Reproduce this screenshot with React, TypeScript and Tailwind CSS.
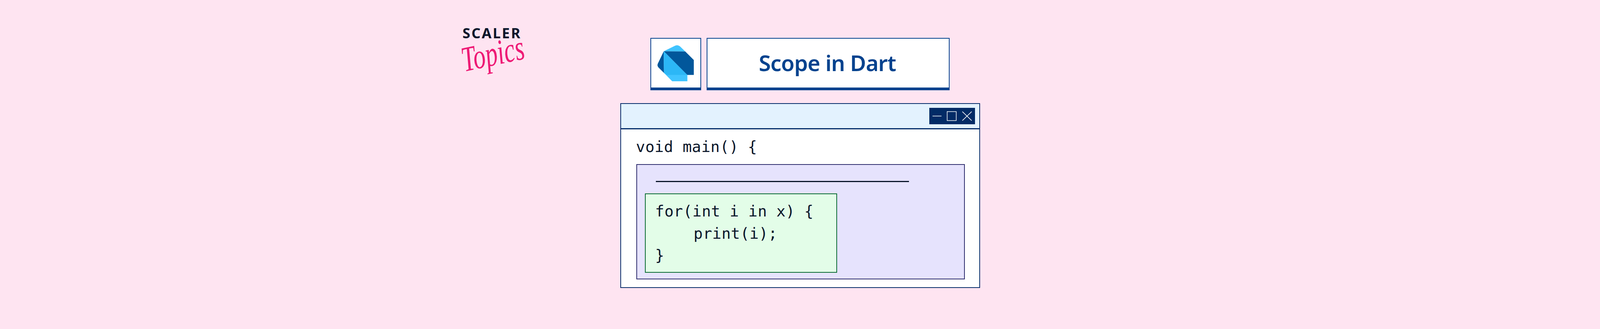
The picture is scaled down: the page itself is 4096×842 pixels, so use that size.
export default function App() {
  const mono = "font-['DejaVu_Sans_Mono',monospace]";
  return (
    <div className="flex h-[842px] w-[4096px] items-start overflow-hidden bg-[#fee4f1]">
      <div className="w-[1588px] shrink-0 pl-[1182px] pt-[65px]">
        <div className="pl-[2px] font-['Noto_Sans',sans-serif] text-[36px] leading-[40px] font-bold tracking-[3.2px] text-[#0a162a]">SCALER</div>
        <div className="mt-[7px] origin-left font-['Liberation_Serif',serif] text-[90px] leading-[84px] text-[#ee1a75] italic [transform:rotate(-12deg)_scaleX(0.7)]">Topics</div>
      </div>
      <div className="flex w-[921px] shrink-0 flex-col pt-[97px]">
        <div className="flex justify-center gap-[14px] pr-[2px]">
          <div className="flex h-[134px] w-[130px] items-center justify-center border-2 border-b-[7px] border-[#03428e] bg-white">
            <svg width="96.7" height="95.6" viewBox="130 140 425 420">
              <path d="M210 216 L143 355 Q134 378 150 397 L213 460 Z" fill="#01579b" />
              <path d="M210 216 L335 154 Q364 138 392 160 L452 218 Z" fill="#40c4ff" />
              <path d="M210 216 L452 218 L548 314 L548 482 L472 482 Z" fill="#01579b" />
              <path d="M210 216 L476 482 L476 553 L305 553 L213 460 Z" fill="#40c4ff" />
              <path d="M210 216 L472 482 L246 482 L213 460 Z" fill="#2cb7f6" />
            </svg>
          </div>
          <div className="flex h-[134px] w-[622px] items-center justify-center border-2 border-b-[7px] border-[#03428e] bg-white pb-[4px] pr-[3px]">
            <span className="font-['Noto_Sans',sans-serif] text-[56px] font-semibold tracking-[-0.9px] text-[#03428e]">Scope in Dart</span>
          </div>
        </div>
        <div className="mt-[33px] flex h-[473px] flex-col border-2 border-[#042c6a] bg-white">
          <div className="flex h-[65px] items-center justify-end border-b-[3px] border-[#042c6a] bg-[#e3f2fe] pr-[11px]">
            <svg width="117" height="42" viewBox="0 0 117 42" className="bg-[#022b66]">
              <path d="M8.2 21 H31.3" stroke="#fff" strokeWidth="1.5" fill="none" />
              <rect x="45.7" y="9.6" width="23.2" height="23" stroke="#fff" strokeWidth="1.5" fill="none" />
              <path d="M84.6 9.6 L108.5 32.6 M108.5 9.6 L84.6 32.6" stroke="#fff" strokeWidth="1.5" fill="none" />
            </svg>
          </div>
          <div className={`${mono} h-[89px] pl-[38px] pt-[16px] text-[39px] leading-[57px] tracking-[0.4px] text-[#0a162a]`}>void main() {"{"}</div>
          <div className="ml-[39px] mr-[37px] h-[295px] border-2 border-[#2f2e6e] bg-[#e6e3fd] pl-[20px] pt-[41px]">
            <div className="ml-[28px] h-[3px] w-[648px] bg-[#0a162a]" />
            <div className={`${mono} mt-[29px] h-[203px] w-[492px] whitespace-pre border-2 border-[#0a6b32] bg-[#e3fde8] pl-[24px] pt-[16px] text-[39px] leading-[56.6px] tracking-[0.4px] text-[#0a162a]`}>
              <div>{"for(int i in x) {"}</div>
              <div className="pl-[3px]">{"    print(i);"}</div>
              <div>{"}"}</div>
            </div>
          </div>
        </div>
      </div>
    </div>
  );
}
